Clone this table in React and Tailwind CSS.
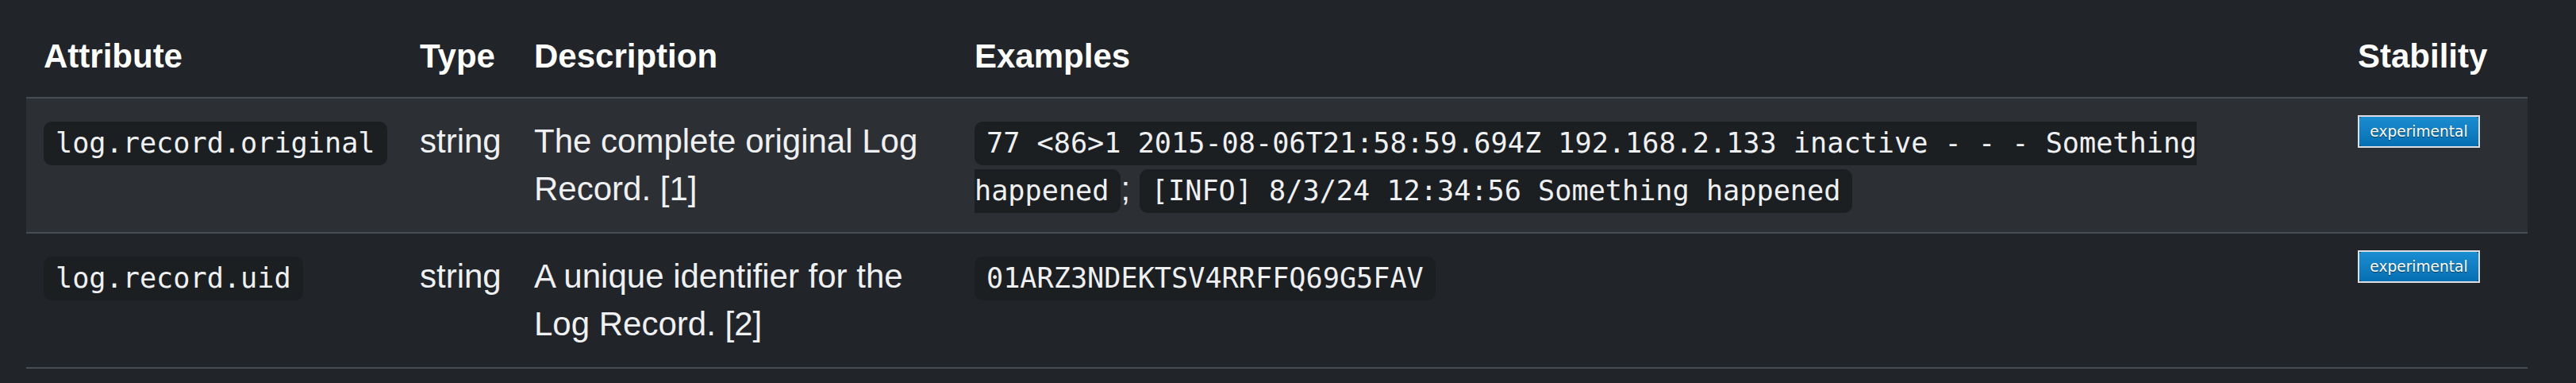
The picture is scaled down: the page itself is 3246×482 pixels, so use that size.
const ROWS = [
    {
        attr: "log.record.original",
        type: "string",
        desc: "The complete original Log Record. [1]",
        examples: [
            "77 <86>1 2015-08-06T21:58:59.694Z 192.168.2.133 inactive - - - Something happened",
            "[INFO] 8/3/24 12:34:56 Something happened"
        ],
        stability: "experimental"
    },
    {
        attr: "log.record.uid",
        type: "string",
        desc: "A unique identifier for the Log Record. [2]",
        examples: ["01ARZ3NDEKTSV4RRFFQ69G5FAV"],
        stability: "experimental"
    }
]

function Code({ children }) {
    return (
        <code className="bg-[#1c1f22] rounded-[10px] pl-[15px] pr-[15px] pt-[6px] pb-[8px] font-['DejaVu_Sans_Mono',monospace] text-[35.2px] leading-none text-[#eef0f2]">
            {children}
        </code>
    )
}

function Badge({ label }) {
    return (
        <span className="block border-2 border-[#dcdfe2]">
            <span className="block w-[150px] h-[37px] rounded-[3px] bg-gradient-to-b from-[#1b8dd1] to-[#0470b3] text-center pt-[1px] font-['DejaVu_Sans',sans-serif] text-[18.6px] leading-[36px] text-white [text-shadow:0_1px_1px_rgba(0,0,0,0.55)]">
                {label}
            </span>
        </span>
    )
}

export default function App() {
    const th = "text-left align-top font-bold text-white px-[22px] pt-[41px] pb-[21px] border-b-2 border-[#474c53]"
    const td = "align-top px-[22px] py-[24px] border-b-2 border-[#474c53]"

    return (
        <div className="min-h-screen bg-[#212428] pl-[33px] font-['Liberation_Sans',Arial,sans-serif] text-[42px] leading-[60px] text-[#eef0f2]">
            <table className="table-fixed w-[3152px] border-separate border-spacing-0">
                <colgroup>
                    <col className="w-[474px]" />
                    <col className="w-[144px]" />
                    <col className="w-[555px]" />
                    <col className="w-[1743px]" />
                    <col className="w-[236px]" />
                </colgroup>
                <thead>
                    <tr>
                        <th className={th}>Attribute</th>
                        <th className={th}>Type</th>
                        <th className={th}>Description</th>
                        <th className={th}>Examples</th>
                        <th className={th}>Stability</th>
                    </tr>
                </thead>
                <tbody>
                    {ROWS.map((row, i) => (
                        <tr key={row.attr} className={i % 2 === 0 ? "bg-[#2c2f33]" : ""}>
                            <td className={td}>
                                <Code>{row.attr}</Code>
                            </td>
                            <td className={td}>{row.type}</td>
                            <td className={td}>{row.desc}</td>
                            <td className={td}>
                                {row.examples.map((ex, j) => (
                                    <span key={j}>
                                        {j > 0 && "; "}
                                        <Code>{ex}</Code>
                                    </span>
                                ))}
                            </td>
                            <td className={`${td} pt-[21px]`}>
                                <div className="flex">
                                    <Badge label={row.stability} />
                                </div>
                            </td>
                        </tr>
                    ))}
                </tbody>
            </table>
        </div>
    )
}
